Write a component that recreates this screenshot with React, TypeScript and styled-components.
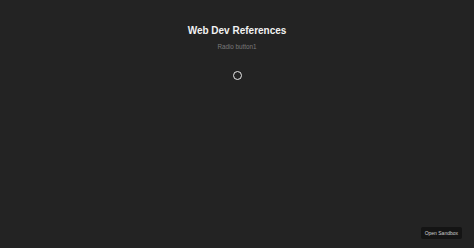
import React from 'react';
import styled, { createGlobalStyle } from 'styled-components';

const GlobalStyle = createGlobalStyle`
  html, body {
    margin: 0;
    padding: 0;
    background: #232323;
  }
  body {
    font-family: "Liberation Sans", Arial, sans-serif;
  }
`;

const Page = styled.div`
  position: relative;
  width: 100%;
  height: 100vh;
  background: #232323;
  display: flex;
  flex-direction: column;
  align-items: center;
  box-sizing: border-box;
  padding-top: 25px;
`;

const Title = styled.h1`
  margin: 0;
  font-size: 10px;
  font-weight: 700;
  color: #f2f2f2;
  line-height: 12px;
`;

const Subtitle = styled.p`
  margin: 6px 0 0;
  font-size: 6.3px;
  color: #7a7a7a;
  line-height: 8px;
`;

const Radio = styled.input`
  appearance: none;
  margin: 19.5px 0 0;
  width: 9px;
  height: 9px;
  border: 1.3px solid #e8e8e8;
  border-radius: 50%;
  background: transparent;
  box-sizing: border-box;
`;

const SandboxButton = styled.button`
  position: absolute;
  right: 12px;
  bottom: 9px;
  height: 12px;
  padding: 0 4px;
  border: none;
  border-radius: 2px;
  background: #141414;
  color: #cfcfcf;
  font-family: "Liberation Sans", Arial, sans-serif;
  font-size: 5px;
  line-height: 12px;
`;

export default function App() {
  return (
    <>
      <GlobalStyle />
      <Page>
        <Title>Web Dev References</Title>
        <Subtitle>Radio button1</Subtitle>
        <Radio type="radio" name="r" />
        <SandboxButton>Open Sandbox</SandboxButton>
      </Page>
    </>
  );
}
